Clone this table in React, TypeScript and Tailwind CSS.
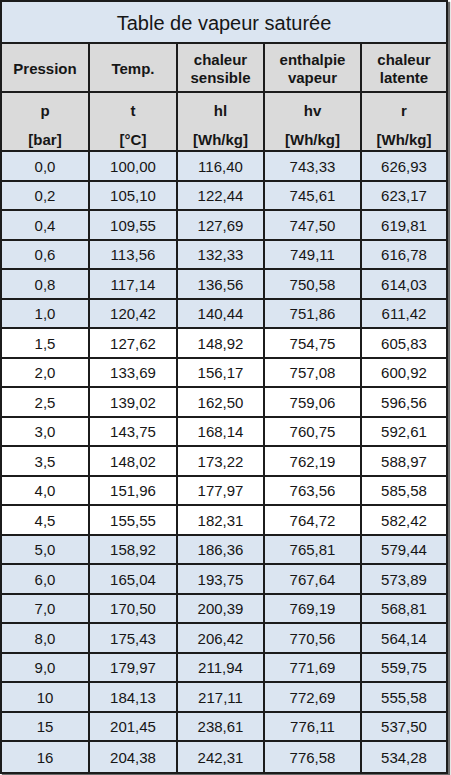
import React from "react";

const rows: [string, string, string, string, string][] = [
  ["0,0", "100,00", "116,40", "743,33", "626,93"],
  ["0,2", "105,10", "122,44", "745,61", "623,17"],
  ["0,4", "109,55", "127,69", "747,50", "619,81"],
  ["0,6", "113,56", "132,33", "749,11", "616,78"],
  ["0,8", "117,14", "136,56", "750,58", "614,03"],
  ["1,0", "120,42", "140,44", "751,86", "611,42"],
  ["1,5", "127,62", "148,92", "754,75", "605,83"],
  ["2,0", "133,69", "156,17", "757,08", "600,92"],
  ["2,5", "139,02", "162,50", "759,06", "596,56"],
  ["3,0", "143,75", "168,14", "760,75", "592,61"],
  ["3,5", "148,02", "173,22", "762,19", "588,97"],
  ["4,0", "151,96", "177,97", "763,56", "585,58"],
  ["4,5", "155,55", "182,31", "764,72", "582,42"],
  ["5,0", "158,92", "186,36", "765,81", "579,44"],
  ["6,0", "165,04", "193,75", "767,64", "573,89"],
  ["7,0", "170,50", "200,39", "769,19", "568,81"],
  ["8,0", "175,43", "206,42", "770,56", "564,14"],
  ["9,0", "179,97", "211,94", "771,69", "559,75"],
  ["10", "184,13", "217,11", "772,69", "555,58"],
  ["15", "201,45", "238,61", "776,11", "537,50"],
  ["16", "204,38", "242,31", "776,58", "534,28"],
];

const headers = [
  ["Pression"],
  ["Temp."],
  ["chaleur", "sensible"],
  ["enthalpie", "vapeur"],
  ["chaleur", "latente"],
];

const symbols = [
  ["p", "[bar]"],
  ["t", "[°C]"],
  ["hl", "[Wh/kg]"],
  ["hv", "[Wh/kg]"],
  ["r", "[Wh/kg]"],
];

const cols = "grid grid-cols-[88px_88px_87px_97px_1fr]";

export default function App() {
  return (
    <div className="w-[451px] h-[775px] bg-white" style={{ fontFamily: '"Liberation Sans", Arial, sans-serif' }}>
      <div className="w-[448px] border-2 border-[#1c1c1c] shadow-[2px_2px_1px_#6b6b6b] text-[#161616]">
        <div className="h-[42px] pt-[2px] bg-[#dbe5f1] border-b-2 border-[#1c1c1c] flex items-center justify-center text-[20px] leading-none">
          Table de vapeur saturée
        </div>
        <div className={`${cols} h-[49px] bg-[#dadada] border-b-2 border-[#1c1c1c]`}>
          {headers.map((h, i) => (
            <div
              key={i}
              className={`flex flex-col items-center justify-center pt-[3px] font-bold text-[15px] leading-[18px] ${i < 4 ? "border-r-2 border-[#1c1c1c]" : ""}`}
            >
              {h.map((t) => (
                <span key={t}>{t}</span>
              ))}
            </div>
          ))}
        </div>
        <div className={`${cols} h-[59px] bg-[#dadada] border-b-2 border-[#1c1c1c]`}>
          {symbols.map((s, i) => (
            <div
              key={i}
              className={`flex flex-col items-center justify-center pt-[3px] font-bold text-[15px] leading-[29px] ${i < 4 ? "border-r-2 border-[#1c1c1c]" : ""}`}
            >
              {s.map((t) => (
                <span key={t}>{t}</span>
              ))}
            </div>
          ))}
        </div>
        {rows.map((r, ri) => {
          const blue = ri < 6 || ri >= 13;
          const last = ri === rows.length - 1;
          return (
            <div
              key={ri}
              className={`${cols} h-[29.5px] ${blue ? "bg-[#dbe5f1]" : "bg-white"} ${last ? "" : "border-b-2 border-[#1c1c1c]"}`}
            >
              {r.map((v, i) => (
                <div
                  key={i}
                  className={`flex items-center justify-center pt-[1px] text-[15px] leading-none ${i < 4 ? "border-r-2 border-[#1c1c1c]" : ""}`}
                >
                  {v}
                </div>
              ))}
            </div>
          );
        })}
      </div>
    </div>
  );
}
